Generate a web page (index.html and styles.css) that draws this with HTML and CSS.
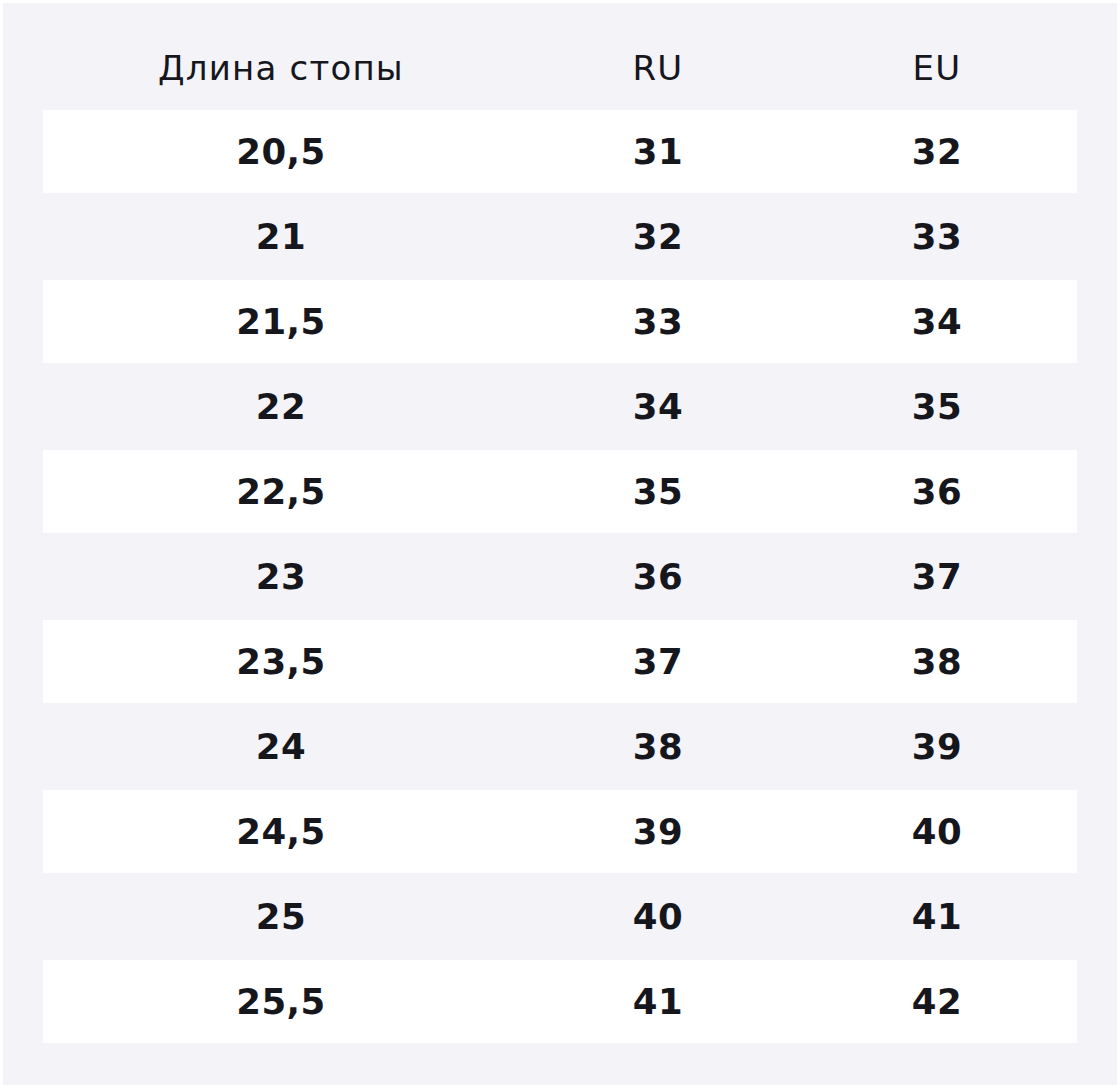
FILE: index.html
```html
<!DOCTYPE html>
<html lang="ru">
<head>
<meta charset="utf-8">
<link rel="stylesheet" href="styles.css">
</head>
<body>
<div class="panel">
  <div class="row head"><div>Длина стопы</div><div>RU</div><div>EU</div></div>
  <div class="row odd"><div>20,5</div><div>31</div><div>32</div></div>
  <div class="row even"><div>21</div><div>32</div><div>33</div></div>
  <div class="row odd"><div>21,5</div><div>33</div><div>34</div></div>
  <div class="row even"><div>22</div><div>34</div><div>35</div></div>
  <div class="row odd"><div>22,5</div><div>35</div><div>36</div></div>
  <div class="row even"><div>23</div><div>36</div><div>37</div></div>
  <div class="row odd"><div>23,5</div><div>37</div><div>38</div></div>
  <div class="row even"><div>24</div><div>38</div><div>39</div></div>
  <div class="row odd"><div>24,5</div><div>39</div><div>40</div></div>
  <div class="row even"><div>25</div><div>40</div><div>41</div></div>
  <div class="row odd"><div>25,5</div><div>41</div><div>42</div></div>
</div>
</body>
</html>
```
FILE: styles.css
```css
html, body {
  margin: 0;
  padding: 0;
  background: #ffffff;
}
body {
  font-family: "DejaVu Sans", sans-serif;
  color: #16161d;
}
.panel {
  margin: 3px;
  width: 1114px;
  height: 1082px;
  box-sizing: border-box;
  background: #f3f3f8;
  padding: 40px 40px 0 40px;
}
.row {
  display: grid;
  grid-template-columns: 476px 278px 1fr;
  align-items: center;
  text-align: center;
  font-size: 35.5px;
  font-weight: bold;
  letter-spacing: 0.5px;
}
.row.head {
  height: 67px;
  box-sizing: border-box;
  padding-bottom: 18px;
  font-weight: normal;
  font-size: 34px;
  letter-spacing: 1.2px;
}
.row.odd {
  height: 83px;
  background: #ffffff;
}
.row.even {
  height: 87px;
}
```
